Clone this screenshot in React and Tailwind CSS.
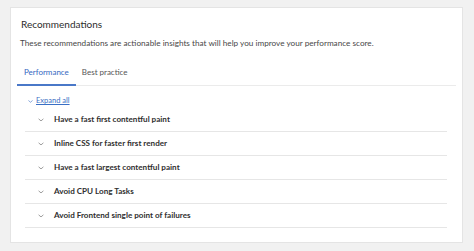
import React from "react";

const items = [
  "Have a fast first contentful paint",
  "Inline CSS for faster first render",
  "Have a fast largest contentful paint",
  "Avoid CPU Long Tasks",
  "Avoid Frontend single point of failures",
];

function Chevron({ className }) {
  return (
    <svg viewBox="0 0 10 6" className={className} fill="none" stroke="currentColor" strokeWidth="1.2" strokeLinecap="round" strokeLinejoin="round">
      <path d="M1.5 1.5 L5 4.5 L8.5 1.5" />
    </svg>
  );
}

export default function App() {
  return (
    <div className="w-[474px] h-[251px] bg-[#f1f1f1] pt-[7px] pl-[10px]" style={{ fontFamily: "Lato, 'Open Sans', sans-serif" }}>
      <div className="w-[453px] h-[236px] bg-white border border-[#e4e4e4]">
        <div className="ml-[10px] mt-[9px] text-[10px] leading-[14px] text-[#2c2c2c] whitespace-nowrap">Recommendations</div>
        <div className="ml-[9px] mt-[6px] text-[8.2px] leading-[12px] text-[#474747] whitespace-nowrap">
          These recommendations are actionable insights that will help you improve your performance score.
        </div>
        <div className="ml-[6px] mr-[6px] mt-[11px] flex border-b border-[#ebebeb]">
          <div className="px-[7px] text-[8px] leading-[24px] text-[#3568bf] border-b-2 border-[#4a78c8] -mb-px whitespace-nowrap">Performance</div>
          <div className="px-[6px] text-[8px] leading-[24px] text-[#555555] whitespace-nowrap">Best practice</div>
        </div>
        <div className="ml-[17px] mt-[9px] flex items-center h-[12px]">
          <Chevron className="w-[5px] h-[3px] text-[#3a6fc4]" />
          <span className="ml-[3px] text-[7.5px] leading-[12px] text-[#3a6fc4] underline whitespace-nowrap">Expand all</span>
        </div>
        <div className="ml-[14px] mr-[15px] mt-[1px]">
          {items.map((t) => (
            <div key={t} className="h-[24px] flex items-center border-b border-[#e6e6e6]">
              <Chevron className="ml-[13px] w-[6px] h-[4px] text-[#777]" />
              <span className="ml-[10px] text-[8.1px] font-bold text-[#2f2f2f] whitespace-nowrap">{t}</span>
            </div>
          ))}
        </div>
      </div>
    </div>
  );
}
